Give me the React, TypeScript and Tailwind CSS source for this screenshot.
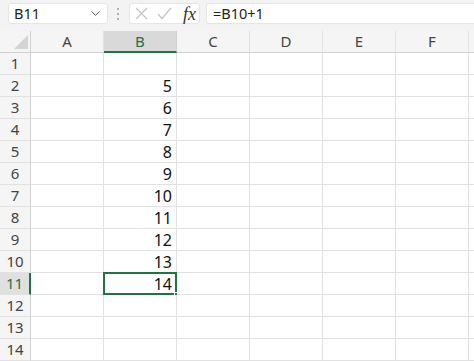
import { ChevronDown } from 'lucide-react';

const cols = ['A', 'B', 'C', 'D', 'E', 'F'];
const rows = Array.from({ length: 14 }, (_, i) => i + 1);

// values in column B
const values: Record<number, number> = { 2: 5, 3: 6, 4: 7, 5: 8, 6: 9, 7: 10, 8: 11, 9: 12, 10: 13, 11: 14 };

const SEL_ROW = 11;

const Toolbar = () => (
  <div className="flex h-[31px] items-start bg-[#f3f3f3] pt-[3px] pl-2">
    {/* name box */}
    <div className="flex h-[21px] w-[100px] items-center justify-between rounded-[3px] border border-[#e6e6e6] bg-white pl-[5px] pr-[4px] text-[14.5px] text-[#222]">
      <span>B11</span>
      <ChevronDown size={15} strokeWidth={1.6} className="text-[#555]" />
    </div>
    {/* dots */}
    <div className="mx-[9px] mt-[5px] flex w-[3px] flex-col gap-[3px]">
      <div className="h-[2px] w-[2px] rounded-full bg-[#9a9a9a]" />
      <div className="h-[2px] w-[2px] rounded-full bg-[#9a9a9a]" />
      <div className="h-[2px] w-[2px] rounded-full bg-[#9a9a9a]" />
    </div>
    {/* cancel / enter / fx */}
    <div className="flex h-[21px] w-[71px] items-center rounded-[3px] border border-[#e6e6e6] bg-white pl-[5px]">
      <svg width="13" height="13" viewBox="0 0 13 13" className="mr-[9px]">
        <path d="M1 1 L12 12 M12 1 L1 12" stroke="#c4c4c4" strokeWidth="1.2" fill="none" />
      </svg>
      <svg width="15" height="13" viewBox="0 0 15 13" className="mr-[11px]">
        <path d="M1 7 L5 11.5 L14 1" stroke="#c4c4c4" strokeWidth="1.2" fill="none" />
      </svg>
      <span className="text-[18px] italic leading-none text-[#333] [font-family:'Liberation_Serif',serif]">fx</span>
    </div>
    {/* formula input */}
    <div className="ml-[6px] flex h-[21px] flex-1 items-center rounded-l-[3px] border border-r-0 border-[#e6e6e6] bg-white pl-[6px] text-[14.5px] text-[#222]">
      =B10+1
    </div>
  </div>
);

const HeaderRow = () => (
  <div className="flex h-[22px]">
    <div className="relative h-full w-[31px] shrink-0 border-r border-b border-[#d0d0d0] bg-[#f5f5f5]">
      <svg width="16" height="16" viewBox="0 0 16 16" className="absolute right-[1px] bottom-[2px]">
        <path d="M15 1 L15 15 L1 15 Z" fill="#d4d4d4" />
      </svg>
    </div>
    {cols.map((c) =>
      c === 'B' ? (
        <div
          key={c}
          className="flex h-full w-[73px] shrink-0 items-center justify-center border-r border-b-2 border-r-[#d0d0d0] border-b-[#217346] bg-[#d9d9d9] pt-[1px] text-[15px] text-[#1e7145]"
        >
          {c}
        </div>
      ) : (
        <div
          key={c}
          className="flex h-full w-[73px] shrink-0 items-center justify-center border-r border-b border-r-[#e1e1e1] border-b-[#d0d0d0] bg-[#f5f5f5] text-[15px] text-[#444]"
        >
          {c}
        </div>
      )
    )}
    <div className="h-full flex-1 border-b border-[#d0d0d0] bg-[#f5f5f5]" />
  </div>
);

const Row = ({ n }: { n: number }) => {
  const sel = n === SEL_ROW;
  return (
    <div className="flex h-[22px]">
      <div
        className={`flex h-full w-[31px] shrink-0 items-center justify-center border-b border-b-[#e1e1e1] text-[15px] ${
          sel ? 'border-r-2 border-r-[#217346] bg-[#e0e0e0] text-[#1e7145]' : 'border-r border-r-[#d0d0d0] bg-[#f5f5f5] text-[#444]'
        }`}
      >
        {n}
      </div>
      {cols.map((c) => (
        <div
          key={c}
          className="relative flex h-full w-[73px] shrink-0 items-center justify-end border-r border-b border-[#e1e1e1] bg-white pr-[4px] text-[16px] text-[#111]"
        >
          {c === 'B' ? values[n] : null}
          {c === 'B' && sel && (
            <>
              <div className="absolute -top-[1px] -left-[1px] h-[23px] w-[74px] border-2 border-[#217346]" />
              <div className="absolute -right-[3px] -bottom-[3px] h-[5px] w-[5px] border border-white bg-[#217346]" />
            </>
          )}
        </div>
      ))}
      <div className="h-full flex-1 border-b border-[#e1e1e1] bg-white" />
    </div>
  );
};

export default function App() {
  return (
    <div className="h-[361px] w-[474px] overflow-hidden bg-white [font-family:'Noto_Sans',sans-serif]">
      <Toolbar />
      <HeaderRow />
      {rows.map((n) => (
        <Row key={n} n={n} />
      ))}
    </div>
  );
}
